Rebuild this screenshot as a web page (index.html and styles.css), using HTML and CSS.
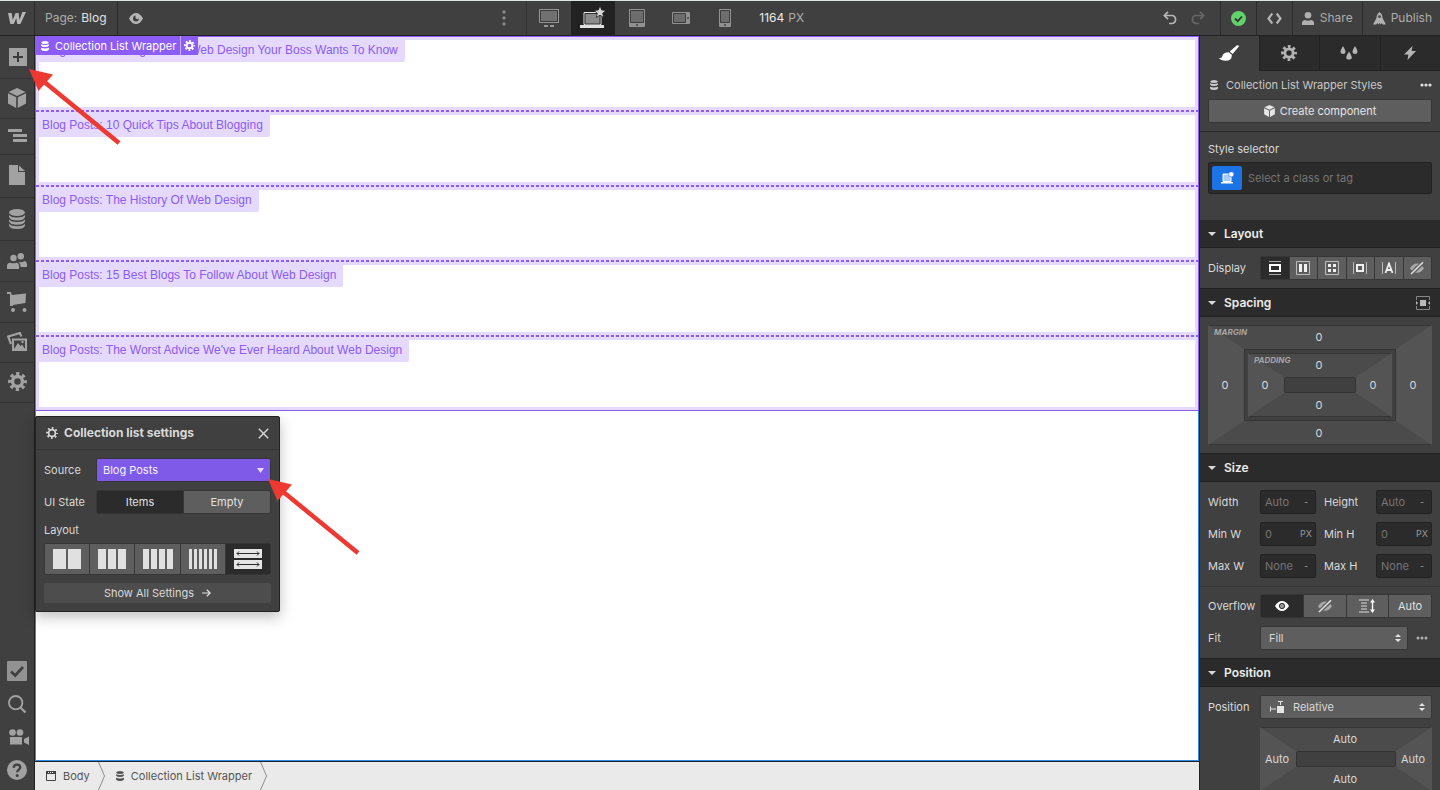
FILE: index.html
```html
<!DOCTYPE html>
<html lang="en">
<head>
<meta charset="utf-8">
<title>Page: Blog</title>
<link rel="stylesheet" href="styles.css">
</head>
<body>
<svg class="sprite" aria-hidden="true">
  <symbol id="gear" viewBox="0 0 20 20"><g fill="none" stroke="currentColor"><circle cx="10" cy="10" r="5.2" stroke-width="3.600"/><circle cx="10" cy="10" r="8.2" stroke-width="3.4" stroke-dasharray="3.4 3.04" stroke-dashoffset="1.7"/></g></symbol>
  <symbol id="stack" viewBox="0 0 16 20"><g fill="currentColor"><ellipse cx="8" cy="3.500" rx="8" ry="3.500"/><path d="M0 6q2 2.500 8 2.500T16 6v2q-1 3.500-8 3.500T0 8z"/><path d="M0 10.500q2 2.500 8 2.500t8-2.500v1.700q-1 3.500-8 3.500t-8-3.500z"/><path d="M0 14.800q2 2.500 8 2.500t8-2.500v1.700q-1 3.500-8 3.500t-8-3.500z"/></g></symbol>
  <symbol id="stack-small" viewBox="0 0 8 10"><g fill="currentColor"><path d="M0 1.500Q1 0 4 0t4 1.500Q7 3 4 3T0 1.500z"/><path d="M0 3.300q4 1.400 8 0v1.200Q7 6 4 6T0 4.500z"/><path d="M0 6.800q4 1.400 8 0v1.700Q7 10 4 10T0 8.500z"/></g></symbol>
  <symbol id="cube" viewBox="0 0 18 20"><g fill="currentColor"><path d="M9 0l8.400 3.900L9 8 .6 3.900z"/><path d="M0 5.300l8.200 4V20L0 15.600z"/><path d="M18 5.300l-8.200 4V20l8.200-4.400z"/></g></symbol>
  <symbol id="hidden" viewBox="0 0 16 14"><path d="M1 7.300Q4 2.500 8 2.500q4 0 7 4.800Q12 11.800 8 11.800T1 7.300z" fill="#a8a8a8"/><path d="M6 7.200a2 2 0 0 1 2-2" fill="none" stroke="#5e5e5e"/><path d="M1.500 13.500L14.500 1" stroke="#5e5e5e" stroke-width="4"/><path d="M2 13L14 1.200" stroke="#e0e0e0" stroke-width="1.600"/></symbol>
  <symbol id="arrow" viewBox="0 0 92 78"><path d="M16 13.500L90 74" stroke="#ee3932" stroke-width="4.500" fill="none"/><path d="M0 0l24 5.500L9.500 22z" fill="#ee3932"/></symbol>
</svg>

<header class="topbar">
  <button class="logo" aria-label="Home"><svg width="18" height="13" viewBox="0 0 18 13"><path fill="#b5b5b5" d="M0 1h3.700l1.100 7L7.600 1h3l.8 6.900L14.400 0H18l-5.600 12H9.200l-.9-5.700L5.700 12H2.300z"/></svg></button>
  <button class="page-name"><span>Page:</span> Blog</button>
  <button class="preview" aria-label="Preview"><svg width="14" height="11" viewBox="0 0 14 11"><path fill="#b5b5b5" fill-rule="evenodd" d="M0 5.500Q3 0 7 0t7 5.500Q11 11 7 11T0 5.500zM7 2.600a3 3 0 1 0 3 3A2 2 0 0 1 7 2.600z"/></svg></button>
  <div class="spacer"></div>
  <button class="more" aria-label="More"><svg width="4" height="16" viewBox="0 0 4 16" fill="#858585"><circle cx="2" cy="2" r="1.700"/><circle cx="2" cy="8" r="1.700"/><circle cx="2" cy="14" r="1.700"/></svg></button>
  <div class="devices">
    <button aria-label="Desktop"><svg width="20" height="20" viewBox="0 0 20 20"><path d="M.5 1.500h19v13H.5z" fill="#707070" stroke="#969696"/><path d="M1.500 2.500h17v11h-17z" fill="none" stroke="#3a3a3a"/><path d="M5 17h4v2H5zM11 17h4v2h-4z" fill="#969696"/></svg></button>
    <button class="active" aria-label="Laptop"><svg width="26" height="24" viewBox="0 0 26 24"><path d="M4 6.500h17v12H4z" fill="#8b8b8b" stroke="#e5e5e5"/><path d="M5 7.500h15V18H5z" fill="none" stroke="#333"/><path d="M0 19h24v3H0z" fill="#e0e0e0"/><path d="M20 0l1.700 4 4.300.4-3.300 2.800 1 4.300-3.700-2.300-3.700 2.300 1-4.300L14 4.400l4.300-.4z" fill="#d8d8d8" stroke="#222" stroke-width=".8"/></svg></button>
    <button aria-label="Tablet"><svg width="16" height="18" viewBox="0 0 16 18"><rect width="16" height="18" rx="1" fill="#929292"/><path d="M1.500 1.500h13v12h-13z" fill="#6d6d6d" stroke="#3c3c3c"/><circle cx="8" cy="16" r="1" fill="#444"/></svg></button>
    <button aria-label="Mobile landscape"><svg width="18" height="12" viewBox="0 0 18 12"><rect width="18" height="12" rx="1" fill="#929292"/><path d="M1.500 1.500h12v9h-12z" fill="#6d6d6d" stroke="#3c3c3c"/><circle cx="16" cy="6" r="1" fill="#444"/></svg></button>
    <button aria-label="Mobile portrait"><svg width="12" height="18" viewBox="0 0 12 18"><rect width="12" height="18" rx="1" fill="#929292"/><path d="M1.500 1.500h9v12h-9z" fill="#6d6d6d" stroke="#3c3c3c"/><circle cx="6" cy="16" r="1" fill="#444"/></svg></button>
  </div>
  <div class="canvas-width">1164 <span>PX</span></div>
  <div class="spacer"></div>
  <div class="history">
    <button aria-label="Undo"><svg width="14" height="14" viewBox="0 0 14 14"><path d="M2 4.500h7a3.500 3.500 0 0 1 3.500 3.500v1A3.500 3.500 0 0 1 9 12.500H6M5 .8L1.300 4.500 5 8.200" fill="none" stroke="#b5b5b5" stroke-width="1.700"/></svg></button>
    <button aria-label="Redo"><svg width="14" height="14" viewBox="0 0 14 14"><path d="M12 4.500H5A3.500 3.500 0 0 0 1.500 8v1A3.500 3.500 0 0 0 5 12.500h3M9 .8l3.700 3.700L9 8.200" fill="none" stroke="#666" stroke-width="1.700"/></svg></button>
  </div>
  <button class="tool" aria-label="Saved"><svg width="15" height="15" viewBox="0 0 15 15"><circle cx="7.500" cy="7.500" r="7.500" fill="#63d26c"/><path d="M4 7.500l2.700 2.700L11 5.500" fill="none" stroke="#333" stroke-width="1.800"/></svg></button>
  <button class="tool" aria-label="Code"><svg width="15" height="11" viewBox="0 0 15 11"><path d="M5.300.5L1.500 5.500l3.800 5M9.700.5l3.800 5-3.800 5" fill="none" stroke="#b5b5b5" stroke-width="2.200"/></svg></button>
  <button class="tool share"><svg width="12" height="13" viewBox="0 0 12 13" fill="#b0b0b0"><circle cx="6" cy="3.300" r="3.300"/><path d="M0 13v-2q0-2.300 3-3 3 1.400 6 0 3 .7 3 3v2z"/></svg>Share</button>
  <button class="tool publish"><svg width="13" height="13" viewBox="0 0 13 13"><path fill="#b0b0b0" fill-rule="evenodd" d="M6.500 0Q9.500 2 9.500 6L13 12.500H9.700L8.700 11l-1 1.500-1.200-1.500-1.200 1.500-1-1.500-1 1.500H0L3.500 6Q3.500 2 6.500 0zm0 3.200a1.400 1.400 0 1 0 0 2.800 1.400 1.400 0 0 0 0-2.800z"/></svg>Publish</button>
</header>

<div class="workspace">
  <nav class="rail" aria-label="Tools">
    <button class="h43" aria-label="Add"><svg class="shift" width="18" height="18" viewBox="0 0 18 18"><path fill="#a2a2a2" d="M0 0h18v18H0z"/><path d="M9 4v10M4 9h10" stroke="#3a3a3a" stroke-width="2"/></svg></button>
    <button class="h40 raised" aria-label="Components"><svg width="18" height="20"><use href="#cube"/></svg></button>
    <button class="h36 raised" aria-label="Navigator"><svg width="19" height="13" viewBox="0 0 19 13" fill="#a2a2a2"><path d="M0 0h14v3H0zM5 5h14v3H5zM5 10h14v3H5z"/></svg></button>
    <button class="h43 raised" aria-label="Pages"><svg width="16" height="20" viewBox="0 0 16 20" fill="#a2a2a2"><path d="M0 0h9v7h7v13H0zM10 .5L16 6h-6z"/></svg></button>
    <button class="h43" aria-label="CMS"><svg width="16" height="20"><use href="#stack"/></svg></button>
    <button class="h41" aria-label="Users"><svg width="20" height="16" viewBox="0 0 20 16" fill="#a2a2a2"><circle cx="6.500" cy="5" r="3.200"/><circle cx="13.800" cy="3.200" r="3.200"/><path d="M0 16v-3q0-3 3-3.300 3.500 1.300 6.500 0 2.500.3 2.500 3.300v3zM11 9q4 1 6.500-1 2.500.5 2.500 3.500V14h-6.500q0-4-2.500-5z"/></svg></button>
    <button class="h41" aria-label="Ecommerce"><svg width="20" height="20" viewBox="0 0 20 20" fill="#a2a2a2"><path d="M0 0h4l.7 3L19 1.500 18.500 11 6 13l-.2 1H3V2H0z"/><circle cx="6" cy="18" r="2"/><circle cx="17.500" cy="18" r="2"/></svg></button>
    <button class="h40 raised" aria-label="Assets"><svg width="20" height="19" viewBox="0 0 20 19"><path d="M4 12L1.200 4.500 13 1l1.200 3.500" fill="none" stroke="#a2a2a2" stroke-width="2.200"/><path d="M6 7.500h13V18H6z" fill="none" stroke="#a2a2a2" stroke-width="2"/><path d="M7 17l4-6 2.500 3L15 12.500l3 4.500z" fill="#a2a2a2"/><circle cx="15.500" cy="10" r="1.200" fill="#a2a2a2"/></svg></button>
    <button class="h40 raised" aria-label="Settings"><svg width="19" height="19"><use href="#gear"/></svg></button>
    <div class="rail-bottom">
      <button aria-label="Audit"><svg width="20" height="20" viewBox="0 0 20 20"><rect width="20" height="20" rx="1" fill="#929292"/><path d="M4 10.500l4.200 4L16 6" fill="none" stroke="#404040" stroke-width="2.800"/></svg></button>
      <button aria-label="Search"><svg width="18" height="18" viewBox="0 0 18 18" fill="none" stroke="#a2a2a2"><circle cx="7.700" cy="7.700" r="6.700" stroke-width="1.800"/><path d="M12.500 12.500l5 5" stroke-width="2.200"/></svg></button>
      <button aria-label="Video"><svg class="video" width="20" height="16" viewBox="0 0 20 16" fill="#a2a2a2"><circle cx="3.500" cy="3.500" r="3.300"/><circle cx="11" cy="3.500" r="3.300"/><path d="M1 8h12v7.500H1zM15 10l5-2.500v8.500l-5-2.500z"/></svg></button>
      <button aria-label="Help"><svg width="20" height="20" viewBox="0 0 20 20"><circle cx="10" cy="10" r="10" fill="#a2a2a2"/><path d="M6.800 7.700q0-3 3.200-3t3.200 2.800c0 2-3 2.200-3 4.700" fill="none" stroke="#404040" stroke-width="2.300"/><circle cx="10.200" cy="15.500" r="1.500" fill="#404040"/></svg></button>
    </div>
  </nav>

  <main class="stage">
    <div class="canvas">
      <div class="collection">
        <div class="item"><span>Blog Posts: 5 Things About Web Design Your Boss Wants To Know</span></div>
        <div class="item"><span>Blog Posts: 10 Quick Tips About Blogging</span></div>
        <div class="item"><span>Blog Posts: The History Of Web Design</span></div>
        <div class="item"><span>Blog Posts: 15 Best Blogs To Follow About Web Design</span></div>
        <div class="item"><span>Blog Posts: The Worst Advice We've Ever Heard About Web Design</span></div>
      </div>
      <div class="selection">
        <span><svg width="8" height="10"><use href="#stack-small"/></svg>Collection List Wrapper</span>
        <button aria-label="Element settings"><svg width="11" height="11"><use href="#gear"/></svg></button>
      </div>
      <section class="popover">
        <header>
          <svg width="12" height="12" viewBox="0 0 12 12" fill="none" stroke="#d9d9d9"><circle cx="6" cy="6" r="3.400" stroke-width="1.700"/><circle cx="6" cy="6" r="5" stroke-width="1.900" stroke-dasharray="1.700 2.227" stroke-dashoffset=".85"/></svg>
          <h2>Collection list settings</h2>
          <button aria-label="Close"><svg width="11" height="11" viewBox="0 0 11 11"><path d="M.8.8l9.400 9.400M10.200.8L.8 10.200" stroke="#d9d9d9" stroke-width="1.400"/></svg></button>
        </header>
        <div class="popover-body">
          <div class="field"><label for="source">Source</label><div class="select source"><select id="source"><option>Blog Posts</option></select><svg width="7" height="5" viewBox="0 0 7 5"><path d="M0 0h7L3.500 5z" fill="#e5ddfb"/></svg></div></div>
          <div class="field"><span>UI State</span><div class="segments"><button class="active">Items</button><button>Empty</button></div></div>
          <div class="layout-label">Layout</div>
          <div class="segments layouts">
            <button aria-label="2 columns"><svg width="28" height="20" viewBox="0 0 28 20" fill="#e0e0e0"><path d="M0 0h13v20H0zM15 0h13v20H15z"/></svg></button>
            <button aria-label="3 columns"><svg width="28" height="20" viewBox="0 0 28 20" fill="#e0e0e0"><path d="M0 0h8v20H0zM10 0h8v20h-8zM20 0h8v20h-8z"/></svg></button>
            <button aria-label="4 columns"><svg width="30" height="20" viewBox="0 0 30 20" fill="#e0e0e0"><path d="M0 0h6v20H0zM8 0h6v20H8zM16 0h6v20h-6zM24 0h6v20h-6z"/></svg></button>
            <button aria-label="6 columns"><svg width="28" height="20" viewBox="0 0 28 20" fill="#e0e0e0"><path d="M0 0h3v20H0zM5 0h3v20H5zM10 0h3v20h-3zM15 0h3v20h-3zM20 0h3v20h-3zM25 0h3v20h-3z"/></svg></button>
            <button class="active" aria-label="Full width"><svg width="28" height="20" viewBox="0 0 28 20"><path d="M0 0h28v9H0zM0 11h28v9H0z" fill="#e5e5e5"/><path d="M3 4.500h22M5 2.500l-2 2 2 2M23 2.500l2 2-2 2M3 15.500h22M5 13.500l-2 2 2 2M23 13.500l2 2-2 2" fill="none" stroke="#2b2b2b"/></svg></button>
          </div>
          <button class="show-all">Show All Settings<svg width="9" height="8" viewBox="0 0 9 8"><path d="M0 4h8M4.800.7L8.200 4 4.800 7.300" fill="none" stroke="#e0e0e0" stroke-width="1.200"/></svg></button>
        </div>
      </section>
    </div>
    <nav class="crumbs" aria-label="Breadcrumb">
      <a href="#"><svg width="10" height="10" viewBox="0 0 10 10"><path d="M.5.5h9v9h-9z" fill="none" stroke="#444"/><path d="M0 0h10v3H0z" fill="#444"/><path d="M2 1h1v1H2zM4 1h1v1H4zM6 1h1v1H6z" fill="#eaeaea"/></svg>Body</a>
      <svg class="sep" width="7" height="28" viewBox="0 0 7 28"><path d="M.5 0l6 14-6 14" fill="none" stroke="#8d8d8d"/></svg>
      <a href="#"><svg width="8" height="10"><use href="#stack-small"/></svg>Collection List Wrapper</a>
      <svg class="sep" width="7" height="28" viewBox="0 0 7 28"><path d="M.5 0l6 14-6 14" fill="none" stroke="#8d8d8d"/></svg>
    </nav>
  </main>

  <aside class="inspector">
    <div class="tabs">
      <button class="active" aria-label="Style"><svg width="20" height="16" viewBox="0 0 20 16" fill="#fff"><path d="M18 .3q1.800-.6 1.900 1.300l-6.300 7.300-2.900-2.400zM9.800 7.300l3 2.500q.4 5.900-6.300 6Q2 15.800 0 13q2.600.4 3.300-1.800.8-3.700 6.500-3.900z"/></svg></button>
      <button aria-label="Settings"><svg width="16" height="16"><use href="#gear"/></svg></button>
      <button aria-label="Interactions"><svg width="18" height="14" viewBox="0 0 18 14" fill="#b5b5b5"><path d="M3 0q5 8 0 8T3 0zM15 0q5 8 0 8t0-8zM9 5.500q5.500 8 0 8t0-8z"/></svg></button>
      <button aria-label="Effects"><svg width="12" height="14" viewBox="0 0 12 14"><path fill="#b5b5b5" d="M8.500 0L7.600 5H12L3.500 14l.9-5.500H0z"/></svg></button>
    </div>

    <div class="element">
      <div class="element-name"><svg width="8" height="10"><use href="#stack-small"/></svg><span>Collection List Wrapper Styles</span><button aria-label="More options"><svg width="12" height="4" viewBox="0 0 12 4" fill="#e0e0e0"><circle cx="2" cy="2" r="1.600"/><circle cx="6" cy="2" r="1.600"/><circle cx="10" cy="2" r="1.600"/></svg></button></div>
      <button class="create"><svg width="11" height="12"><use href="#cube"/></svg>Create component</button>
    </div>
    <div class="selector">
      <label for="class-name">Style selector</label>
      <div class="class-box"><button aria-label="Breakpoint"><svg width="13" height="12" viewBox="0 0 13 12"><path d="M2 2h8v7.500H2z" fill="#a9cbf8" stroke="#fff"/><path d="M0 10h12v1.500H0z" fill="#fff"/><circle cx="10.300" cy="2.300" r="2.600" fill="#fff" stroke="#1a74e6" stroke-width=".6"/></svg></button><input id="class-name" type="text" placeholder="Select a class or tag"></div>
    </div>

    <section>
      <h3 class="first"><i></i>Layout</h3>
      <div class="section-body">
        <div class="row"><span class="name">Display</span><div class="segments">
          <button class="active" aria-label="Block"><svg width="12" height="14" viewBox="0 0 12 14"><path d="M0 .5h12M0 13.500h12" stroke="#aaa"/><path d="M1 4h10v6H1z" fill="none" stroke="#fff" stroke-width="2"/></svg></button>
          <button aria-label="Flex"><svg width="14" height="14" viewBox="0 0 14 14"><path d="M.5.5h13v13H.5z" fill="none" stroke="#bbb"/><path d="M3 3h3v8H3zM8 3h3v8H8z" fill="#f0f0f0"/></svg></button>
          <button aria-label="Grid"><svg width="14" height="14" viewBox="0 0 14 14"><path d="M.5.5h13v13H.5z" fill="none" stroke="#bbb"/><path d="M3 3h3v3H3zM8 3h3v3H8zM3 8h3v3H3zM8 8h3v3H8z" fill="#f0f0f0"/></svg></button>
          <button aria-label="Inline block"><svg width="14" height="12" viewBox="0 0 14 12"><path d="M.5 0v12M13.500 0v12" stroke="#bbb"/><path d="M4 3h6v6H4z" fill="none" stroke="#f0f0f0" stroke-width="2"/></svg></button>
          <button aria-label="Inline"><svg width="14" height="12" viewBox="0 0 14 12"><path d="M.5 0v12M13.500 0v12" stroke="#bbb"/><path d="M3.500 11L7 1.500 10.500 11M4.500 8h5" fill="none" stroke="#f0f0f0" stroke-width="1.800"/></svg></button>
          <button aria-label="None"><svg width="16" height="14"><use href="#hidden"/></svg></button>
        </div></div>
      </div>
    </section>

    <section>
      <h3><i></i>Spacing<button aria-label="Spacing mode"><svg width="14" height="14" viewBox="0 0 14 14"><path d="M.5 4V.5h13V4M.5 10v3.500h13V10" fill="none" stroke="#888"/><path d="M4 4h6v6H4z" fill="#bbb"/><path d="M0 5l2 2-2 2zM14 5l-2 2 2 2z" fill="#bbb"/></svg></button></h3>
      <div class="section-body">
        <div class="box">
          <svg class="bevel" viewBox="0 0 224 120" preserveAspectRatio="none"><path d="M0 0l36 24v72L0 120zM224 0l-36 24v72l36 24z" fill="#545454"/></svg>
          <em>MARGIN</em>
          <button class="t">0</button><button class="l">0</button>
          <div class="c ring">
            <div class="box">
              <svg class="bevel" viewBox="0 0 144 64" preserveAspectRatio="none"><path d="M0 0l36 24v16L0 64zM144 0l-36 24v16l36 24z" fill="#545454"/></svg>
              <em>PADDING</em>
              <button class="t">0</button><button class="l">0</button><div class="c core"></div><button class="r">0</button><button class="b">0</button>
            </div>
          </div>
          <button class="r">0</button><button class="b">0</button>
        </div>
      </div>
    </section>

    <section>
      <h3><i></i>Size</h3>
      <div class="section-body sizes">
        <label for="w">Width</label><div class="num"><input id="w" placeholder="Auto"><button>-</button></div>
        <label for="h">Height</label><div class="num"><input id="h" placeholder="Auto"><button>-</button></div>
        <label for="minw">Min W</label><div class="num"><input id="minw" placeholder="0"><button>PX</button></div>
        <label for="minh">Min H</label><div class="num"><input id="minh" placeholder="0"><button>PX</button></div>
        <label for="maxw">Max W</label><div class="num"><input id="maxw" placeholder="None"><button>-</button></div>
        <label for="maxh">Max H</label><div class="num"><input id="maxh" placeholder="None"><button>-</button></div>
      </div>
      <div class="section-body ruled">
        <div class="row"><span class="name">Overflow</span><div class="segments">
          <button class="active" aria-label="Visible"><svg width="14" height="10" viewBox="0 0 14 10"><path d="M0 5q3-5 7-5t7 5q-3 5-7 5T0 5z" fill="#fff"/><circle cx="7" cy="5" r="2.600" fill="#999" stroke="#2b2b2b"/></svg></button>
          <button aria-label="Hidden"><svg width="16" height="14"><use href="#hidden"/></svg></button>
          <button aria-label="Scroll"><svg width="16" height="14" viewBox="0 0 16 14"><path d="M0 1h10M2 4h6M2 7h6M2 10h6M0 13h10" stroke="#ddd"/><path d="M13.500 2v10" stroke="#fff" stroke-width="1.400"/><path d="M13.500 0l2.500 3.500h-5zM13.500 14l2.500-3.500h-5z" fill="#fff"/></svg></button>
          <button>Auto</button>
        </div></div>
        <div class="row"><label class="name" for="fit">Fit</label><div class="select"><select id="fit"><option>Fill</option></select><svg width="6" height="8" viewBox="0 0 6 8"><path d="M0 3l3-3 3 3zM0 5l3 3 3-3z" fill="#e5e5e5"/></svg></div><button class="fit-more" aria-label="More fit options"><svg width="12" height="4" viewBox="0 0 12 4" fill="#b0b0b0"><circle cx="2" cy="2" r="1.500"/><circle cx="6" cy="2" r="1.500"/><circle cx="10" cy="2" r="1.500"/></svg></button></div>
      </div>
    </section>

    <section>
      <h3><i></i>Position</h3>
      <div class="section-body">
        <div class="row"><label class="name" for="position">Position</label><div class="select with-icon"><svg class="lead" width="14" height="12" viewBox="0 0 14 12"><path d="M.5 5.500v5M0 8h6M8 .5h5M10.500 0v4" stroke="#e5e5e5"/><path d="M7 5h7v7H7z" fill="#e5e5e5"/></svg><select id="position"><option>Relative</option></select><svg width="6" height="8" viewBox="0 0 6 8"><path d="M0 3l3-3 3 3zM0 5l3 3 3-3z" fill="#e5e5e5"/></svg></div></div>
        <div class="row"><span class="name"></span><div class="box">
          <svg class="bevel" viewBox="0 0 172 64" preserveAspectRatio="none"><path d="M0 0l36 24v16L0 64zM172 0l-36 24v16l36 24z" fill="#545454"/></svg>
          <button class="t">Auto</button><button class="l">Auto</button><div class="c core"></div><button class="r">Auto</button><button class="b">Auto</button>
        </div></div>
      </div>
    </section>
  </aside>
</div>
<svg class="pointer one" width="92" height="78"><use href="#arrow"/></svg>
<svg class="pointer two" width="92" height="78"><use href="#arrow"/></svg>
</body>
</html>
```
FILE: styles.css
```css
* { box-sizing: border-box; }
body {
  margin: 0; height: 100vh; overflow: hidden; display: flex; flex-direction: column;
  position: relative; border-top: 1px solid #dfe6e2; background: #404040;
  font: 11px/16px Inter, "Liberation Sans", sans-serif; color: #d9d9d9;
}
.sprite { position: absolute; width: 0; height: 0; }
svg { display: block; flex: none; }
button, input, select { font: inherit; color: inherit; background: none; border: 0; padding: 0; margin: 0; border-radius: 0; }
button { display: flex; align-items: center; justify-content: center; }
h2, h3 { margin: 0; }

.topbar { display: flex; flex: none; height: 35px; border-bottom: 1px solid #222; color: #acacac; }
.logo { width: 35px; border-right: 1px solid #2b2b2b; }
.page-name { padding: 0 10px; gap: 4px; border-right: 1px solid #2b2b2b; color: #e0e0e0; font-size: 12px; }
.page-name span { color: #acacac; }
.preview { width: 36px; }
.spacer { flex: 1; }
.more { width: 44px; }
.devices { display: flex; border-left: 1px solid #333; }
.devices button { width: 44px; }
.devices .active { background: #222; }
.canvas-width { display: flex; align-items: center; gap: 4px; padding: 0 30px 0 12px; color: #ececec; font-size: 12px; }
.canvas-width span { color: #acacac; }
.history { display: flex; gap: 14px; padding-right: 15px; }
.tool { min-width: 36px; border-left: 1px solid #2b2b2b; }
.share, .publish { gap: 6px; padding: 0 9px; font-size: 12px; }
.publish { gap: 5px; padding: 0 8px 0 10px; }

.workspace { flex: 1; min-height: 0; display: flex; }
.rail { width: 35px; flex: none; display: flex; flex-direction: column; border-right: 1px solid #222; color: #a2a2a2; }
.rail > button { border-bottom: 1px solid #333; }
.rail .raised { padding-bottom: 2px; }
.shift { margin-left: 2px; }
.h43 { height: 43px; }
.h41 { height: 41px; }
.h40 { height: 40px; }
.h36 { height: 36px; }
.rail-bottom { margin-top: auto; padding-bottom: 4px; }
.rail-bottom button { width: 100%; height: 33px; }
.video { margin-left: 4px; }

.stage { flex: 1; min-width: 0; display: flex; flex-direction: column; }
.canvas { flex: 1; position: relative; background: #fff; border: solid #2b8cf0; border-width: 0 1px 1px; }
.collection {
  margin: 0 -1px; position: relative; display: flex; flex-direction: column; gap: 2px; border: 1px solid #8b5cf6;
  font: 12px/16px "Liberation Sans", Arial, sans-serif; color: #8b5cf6;
  background: repeating-linear-gradient(90deg, #8b5cf6 0 3px, #e5d9fd 3px 5px);
}
.item { height: 73px; border: 3px solid #e5d9fd; background: #fff; display: flex; align-items: flex-start; }
.item span { padding: 2px 7px 4px 3px; background: #e5d9fd; border-radius: 0 0 2px 0; }
.selection { position: absolute; top: 0; left: 0; display: flex; height: 19px; background: #8b5cf6; color: #fff; }
.selection span { display: flex; align-items: center; gap: 6px; padding: 0 4px 0 5px; }
.selection button { width: 18px; border-left: 1px solid #c5adfa; }

.popover {
  position: absolute; left: -1px; top: 380px; width: 245px; border: 1px solid #222; border-radius: 2px;
  background: #404040; box-shadow: 0 5px 14px rgba(0, 0, 0, .25);
}
.popover header { display: flex; align-items: center; gap: 6px; height: 33px; padding: 0 10px; border-bottom: 1px solid #363636; }
.popover h2 { flex: 1; font-size: 12px; font-weight: 700; }
.popover-body { padding: 8px; display: flex; flex-direction: column; }
.field { display: flex; height: 24px; margin-bottom: 8px; align-items: center; }
.field > :first-child { width: 52px; }
.field > :last-child { flex: 1; }
.layout-label { margin-bottom: 5px; }
.segments { display: flex; flex: 1; height: 24px; border: 1px solid #363636; border-radius: 2px; background: #5e5e5e; }
.segments button { flex: 1 1 0; border-left: 1px solid #363636; color: #e0e0e0; }
.segments button:first-child { border-left: 0; }
.segments .active { background: #2b2b2b; }
.layouts { flex: none; height: 32px; margin-bottom: 8px; }
.show-all { height: 20px; gap: 8px; background: #4d4d4d; border-radius: 2px; }

.select { position: relative; display: flex; flex: 1; align-items: center; height: 24px; border: 1px solid #363636; border-radius: 2px; background: #5e5e5e; }
.select select { appearance: none; width: 100%; height: 100%; padding-left: 8px; outline: 0; }
.select > svg:last-child { position: absolute; right: 6px; }
.select .lead { position: absolute; left: 9px; }
.with-icon select { padding-left: 32px; }
.source { background: #7f5ae8; color: #f5f1ff; }
.source select { padding-left: 6px; }

.crumbs { display: flex; height: 29px; flex: none; background: #eaeaea; border-top: 1px solid #222; color: #555; }
.crumbs a { display: flex; align-items: center; gap: 7px; padding: 0 8px 0 11px; color: inherit; text-decoration: none; }

.inspector { width: 241px; flex: none; border-left: 1px solid #222; overflow: hidden; }
.tabs { display: grid; grid-template-columns: 59px repeat(3, 1fr); height: 35px; color: #b5b5b5; }
.tabs button { background: #2b2b2b; border: solid #222; border-width: 0 0 1px 1px; padding-right: 1px; }
.tabs .active { background: none; border: 0; padding: 0 2px 2px 0; }
.element { padding: 6px 8px 8px; border-bottom: 1px solid #2b2b2b; color: #c8c8c8; }
.element-name { display: flex; align-items: center; gap: 8px; padding-left: 2px; margin-bottom: 6px; }
.element-name button { margin-left: auto; }
.create { width: 100%; height: 24px; gap: 5px; background: #5e5e5e; border: 1px solid #363636; border-radius: 2px; color: #e5e5e5; }
.selector { padding: 9px 8px 26px; }
.selector label { display: block; margin-bottom: 5px; }
.class-box { display: flex; height: 32px; padding: 3px; background: #2b2b2b; border: 1px solid #222; border-radius: 2px; }
.class-box button { width: 30px; background: #1a74e6; border-radius: 2px; }
.class-box input { flex: 1; min-width: 0; padding-left: 6px; }
::placeholder { color: #757575; opacity: 1; }

h3 { display: flex; align-items: center; gap: 8px; height: 29px; padding: 0 10px 0 8px; background: #2b2b2b; border: solid #222; border-width: 1px 0; font-size: 12px; font-weight: 600; color: #ececec; }
h3.first { height: 28px; border-top: 0; }
h3 i { border: 4px solid transparent; border-top-color: #d9d9d9; border-bottom: 0; }
h3 button { margin-left: auto; }
.section-body { padding: 8px; display: flex; flex-direction: column; gap: 8px; }
.row { display: flex; align-items: center; }
.name { width: 52px; flex: none; }
.ruled { border-top: 1px solid #363636; padding-top: 7px; }
.sizes { display: grid; grid-template-columns: 44px 1fr 44px 1fr; align-items: center; }
.num { display: flex; height: 24px; background: #2b2b2b; border: 1px solid #222; border-radius: 2px; }
.num input { flex: 1; width: 0; padding-left: 4px; }
.num button { min-width: 18px; font-size: 9px; color: #9a9a9a; }
.fit-more { width: 24px; padding-left: 4px; }

.box {
  flex: 1; position: relative; display: grid; grid-template: 24px auto 24px / 36px 1fr 36px;
  grid-template-areas: "t t t" "l c r" "b b b"; background: #4b4b4b; outline: 1px solid #363636; outline-offset: -1px;
}
.box > * { position: relative; }
.box > button { padding-right: 2px; }
.box .bevel { position: absolute; inset: 0; width: 100%; height: 100%; }
.box em { position: absolute; left: 6px; top: 2px; font-size: 8px; line-height: 10px; font-weight: 700; color: #a5a5a5; }
.t { grid-area: t; }
.l { grid-area: l; }
.c { grid-area: c; }
.r { grid-area: r; }
.b { grid-area: b; }
.ring { padding: 4px; background: #404040; outline: 1px solid #333; outline-offset: -1px; }
.core { height: 16px; background: #404040; border: 1px solid #333; border-radius: 2px; }

.pointer { position: absolute; pointer-events: none; }
.one { left: 29px; top: 68px; }
.two { left: 268px; top: 478px; }
```
